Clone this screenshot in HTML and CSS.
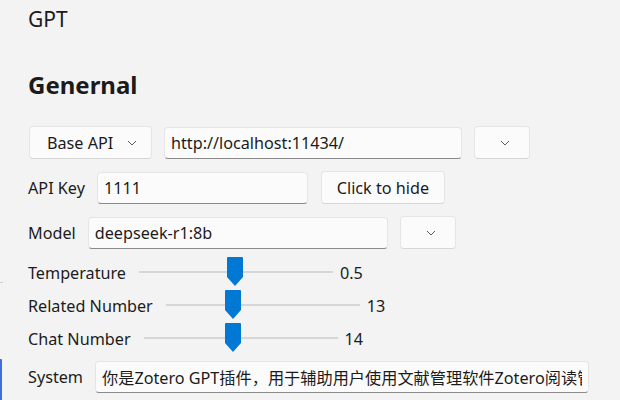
FILE: index.html
```html
<!DOCTYPE html>
<html lang="zh">
<head>
<meta charset="utf-8">
<title>GPT</title>
<link rel="stylesheet" href="styles.css">
</head>
<body>
<div class="edge-line"></div>
<div class="edge-accent"></div>
<main class="page">
  <div class="app-title">GPT</div>
  <h1 class="section-title">Genernal</h1>

  <div class="row">
    <button class="btn btn-select">Base API
      <svg class="chev" width="10" height="6" viewBox="0 0 10 6"><path d="M1 1l4 4 4-4" fill="none" stroke="#5c5c5c" stroke-width="1"/></svg>
    </button>
    <input class="field field-url" type="text" value="http://localhost:11434/" readonly>
    <button class="btn btn-drop">
      <svg class="chev" width="10" height="6" viewBox="0 0 10 6"><path d="M1 1l4 4 4-4" fill="none" stroke="#5c5c5c" stroke-width="1"/></svg>
    </button>
  </div>

  <div class="row">
    <span class="label">API Key</span>
    <input class="field field-key" type="text" value="1111" readonly>
    <button class="btn btn-hide">Click to hide</button>
  </div>

  <div class="row">
    <span class="label">Model</span>
    <input class="field field-model" type="text" value="deepseek-r1:8b" readonly>
    <button class="btn btn-drop">
      <svg class="chev" width="10" height="6" viewBox="0 0 10 6"><path d="M1 1l4 4 4-4" fill="none" stroke="#5c5c5c" stroke-width="1"/></svg>
    </button>
  </div>

  <div class="sliders">
    <div class="slider-row">
      <span class="label">Temperature</span>
      <div class="track"><span class="thumb" style="left:49.5%"><svg width="16" height="29" viewBox="0 0 16 29"><path d="M0 1a1 1 0 0 1 1-1h14a1 1 0 0 1 1 1v19l-8 9-8-9z" fill="#0078d4"/></svg></span></div>
      <span class="value">0.5</span>
    </div>
    <div class="slider-row">
      <span class="label">Related Number</span>
      <div class="track"><span class="thumb" style="left:34.5%"><svg width="16" height="29" viewBox="0 0 16 29"><path d="M0 1a1 1 0 0 1 1-1h14a1 1 0 0 1 1 1v19l-8 9-8-9z" fill="#0078d4"/></svg></span></div>
      <span class="value">13</span>
    </div>
    <div class="slider-row">
      <span class="label">Chat Number</span>
      <div class="track"><span class="thumb" style="left:46%"><svg width="16" height="29" viewBox="0 0 16 29"><path d="M0 1a1 1 0 0 1 1-1h14a1 1 0 0 1 1 1v19l-8 9-8-9z" fill="#0078d4"/></svg></span></div>
      <span class="value">14</span>
    </div>
  </div>

  <div class="row row-system">
    <span class="label">System</span>
    <input class="field field-system" type="text" value="你是Zotero GPT插件，用于辅助用户使用文献管理软件Zotero阅读管理文献。" readonly>
  </div>
</main>
</body>
</html>
```

FILE: styles.css
```css
* { box-sizing: border-box; }

html, body {
  margin: 0;
  height: 100%;
  overflow: hidden;
}

body {
  background: #f3f3f3;
  color: #1b1b1b;
  font-family: "Noto Sans", "Noto Sans CJK SC", sans-serif;
  font-size: 16.2px;
  position: relative;
}

.edge-line {
  position: absolute;
  left: 0;
  top: 282px;
  width: 3px;
  height: 1px;
  background: #cfcfcf;
}

.edge-accent {
  position: absolute;
  left: 0;
  top: 359px;
  width: 2px;
  height: 41px;
  background: #3d6fe0;
  border-top-right-radius: 1px;
}

.page {
  padding: 4px 0 0 28px;
}

.app-title {
  font-size: 21px;
  line-height: 30px;
  font-weight: 400;
}

.section-title {
  margin: 35px 0 0;
  font-size: 24px;
  line-height: 32px;
  font-weight: 700;
}

.row {
  display: flex;
  align-items: center;
  gap: 12px;
  height: 33px;
  margin-top: 12px;
}

.section-title + .row { margin-top: 25px; }

.label {
  white-space: nowrap;
}

.btn {
  font: inherit;
  color: #1b1b1b;
  height: 33px;
  background: #fbfbfb;
  border: 1px solid #e5e5e5;
  border-bottom-color: #d6d6d6;
  border-radius: 4px;
  display: flex;
  align-items: center;
  justify-content: center;
  padding: 0;
}

.btn-select {
  margin-left: 1px;
  width: 123px;
  justify-content: flex-start;
  padding-left: 17px;
  gap: 14px;
}

.btn-drop {
  width: 56px;
  padding-left: 6px;
}

.btn-hide {
  width: 124px;
  margin-left: 1px;
}

.field {
  font: inherit;
  color: #1b1b1b;
  height: 32px;
  background: #fbfbfb;
  border: 1px solid #e5e5e5;
  border-bottom: 1px solid #8a8a8a;
  border-radius: 4px;
  padding: 0 6px;
  outline: none;
}

.field-url { width: 298px; }
.field-key { width: 211px; }
.field-model { width: 300px; }
.field-system { width: 494px; }

.sliders {
  margin-top: 7px;
}

.slider-row {
  display: flex;
  align-items: center;
  height: 33px;
}

.track {
  position: relative;
  width: 194px;
  height: 33px;
  margin-left: 13px;
  margin-right: 7px;
}

.track::before {
  content: "";
  position: absolute;
  left: 0;
  right: 0;
  top: 15px;
  height: 2px;
  background: #d6d6d6;
}

.thumb {
  position: absolute;
  top: 1px;
  width: 16px;
  height: 29px;
  margin-left: -8px;
  display: block;
}

.thumb svg { display: block; }

.row-system {
  margin-top: 5px;
  gap: 12px;
}
```
